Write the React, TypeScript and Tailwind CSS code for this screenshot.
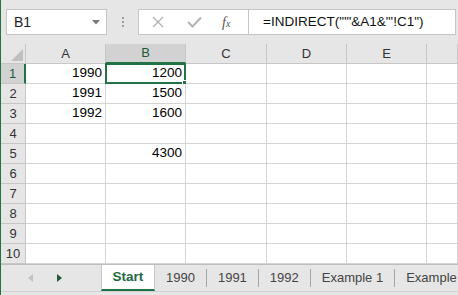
import React from "react";

const cells: Record<string, string> = {
  A1: "1990",
  B1: "1200",
  A2: "1991",
  B2: "1500",
  A3: "1992",
  B3: "1600",
  B5: "4300",
};

const columns = [
  { key: "A", width: "w-[80px]" },
  { key: "B", width: "w-[80px]" },
  { key: "C", width: "w-[81px]" },
  { key: "D", width: "w-[80px]" },
  { key: "E", width: "w-[80px]" },
  { key: "", width: "flex-1" },
];

const rows = [1, 2, 3, 4, 5, 6, 7, 8, 9, 10];

const tabs = ["1990", "1991", "1992", "Example 1", "Example 2"];

function NameBox() {
  return (
    <div className="flex h-[26px] w-[101px] shrink-0 items-center justify-between border border-[#c6c6c6] bg-white pl-[7px] pr-[6px]">
      <span className="text-[14px] text-[#222]">B1</span>
      <svg width="8" height="5" viewBox="0 0 8 5">
        <path d="M0 0 L8 0 L4 4.5 Z" fill="#777" />
      </svg>
    </div>
  );
}

function FormulaBar() {
  return (
    <div className="mr-[2px] flex h-[26px] flex-1 border border-[#c6c6c6] bg-white">
      <div className="flex w-[110px] shrink-0 items-center border-r border-[#c6c6c6]">
        <svg className="ml-[13px]" width="12" height="12" viewBox="0 0 12 12">
          <path d="M1 1 L11 11 M11 1 L1 11" stroke="#b4b4b4" strokeWidth="1.4" />
        </svg>
        <svg className="ml-[23px]" width="15" height="12" viewBox="0 0 15 12">
          <path d="M1 6 L5.5 10.5 L14 1.5" stroke="#b4b4b4" strokeWidth="2" fill="none" />
        </svg>
        <span className="ml-[20px] font-['Liberation_Serif',serif] text-[14px] italic text-[#555]">
          f<span className="text-[10px]">x</span>
        </span>
      </div>
      <div className="flex flex-1 items-center pl-[14px] text-[13.5px] whitespace-nowrap text-[#111]">
        =INDIRECT("'"&amp;A1&amp;"'!C1")
      </div>
    </div>
  );
}

function HeaderRow() {
  return (
    <div className="flex h-[20px] bg-[#e6e6e6]">
      <div className="relative w-[25px] shrink-0 border-r border-b border-[#c6c6c6]">
        <svg className="absolute bottom-[2px] right-[2px]" width="12" height="12" viewBox="0 0 12 12">
          <path d="M12 0 L12 12 L0 12 Z" fill="#bfbfbf" />
        </svg>
      </div>
      {columns.map((c) => {
        const selected = c.key === "B";
        return (
          <div
            key={c.key || "rest"}
            className={
              selected
                ? `${c.width} flex shrink-0 items-center justify-center border-r border-[#c6c6c6] border-b-2 border-b-[#217346] bg-[#d2d2d2] text-[13px] text-[#1e5a3a]`
                : `${c.width} flex items-center justify-center border-r border-b border-[#c6c6c6] text-[13px] text-[#333]`
            }
          >
            {c.key}
          </div>
        );
      })}
    </div>
  );
}

function GridRow({ n }: { n: number }) {
  const selectedRow = n === 1;
  return (
    <div className="flex h-[20px]">
      <div
        className={
          selectedRow
            ? "flex w-[25px] shrink-0 items-center justify-center border-b border-[#c6c6c6] border-r-2 border-r-[#217346] bg-[#d2d2d2] text-[13px] text-[#1e5a3a]"
            : "flex w-[25px] shrink-0 items-center justify-center border-r border-b border-[#c6c6c6] bg-[#e6e6e6] text-[13px] text-[#333]"
        }
      >
        {n}
      </div>
      {columns.map((c) => {
        const id = `${c.key}${n}`;
        const active = id === "B1";
        return (
          <div
            key={c.key || "rest"}
            className={`${c.width} relative flex items-center justify-end border-r border-b border-[#d4d4d4] bg-white pr-[3px] text-[13.5px] text-black`}
          >
            {cells[id] ?? ""}
            {active && (
              <>
                <div className="pointer-events-none absolute -left-[1px] -top-[1px] -right-[1px] -bottom-[1px] border-2 border-[#217346]" />
                <div className="absolute -bottom-[3px] -right-[3px] h-[6px] w-[6px] border border-white bg-[#217346]" />
              </>
            )}
          </div>
        );
      })}
    </div>
  );
}

function TabBar() {
  return (
    <div className="flex h-[31px] flex-col overflow-hidden border-t border-[#bdbdbd] bg-[#e6e6e6]">
      <div className="flex h-[26px] items-stretch">
        <div className="flex w-[100px] shrink-0 items-center">
          <svg className="ml-[27px]" width="5" height="8" viewBox="0 0 5 8">
            <path d="M5 0 L5 8 L0 4 Z" fill="#c2c2c2" />
          </svg>
          <svg className="ml-[24px]" width="5" height="8" viewBox="0 0 5 8">
            <path d="M0 0 L0 8 L5 4 Z" fill="#1e5a3a" />
          </svg>
        </div>
        <div className="flex w-[54px] shrink-0 items-center justify-center border-x border-[#c6c6c6] border-b-2 border-b-[#217346] bg-white text-[13.5px] font-bold text-[#1e6b40]">
          Start
        </div>
        {tabs.map((t, i) => (
          <div key={t} className="flex shrink-0 items-center">
            {i > 0 && <div className="h-[18px] w-px bg-[#a6a6a6]" />}
            <div className="px-[11px] text-[13px] whitespace-nowrap text-[#444]">{t}</div>
          </div>
        ))}
      </div>
      <div className="flex-1 border-t border-[#d0d0d0]" />
    </div>
  );
}

export default function App() {
  return (
    <div className="flex h-[295px] w-[458px] flex-col overflow-hidden border-l border-[#217346] bg-[#e6e6e6] font-['Liberation_Sans',Arial,sans-serif]">
      <div className="flex h-[44px] shrink-0 items-start pl-[5px] pt-[9px]">
        <NameBox />
        <div className="flex h-[26px] w-[31px] shrink-0 flex-col items-center justify-center gap-[2px]">
          <div className="h-[2px] w-[2px] bg-[#a0a0a0]" />
          <div className="h-[2px] w-[2px] bg-[#a0a0a0]" />
          <div className="h-[2px] w-[2px] bg-[#a0a0a0]" />
        </div>
        <FormulaBar />
      </div>
      <div className="flex shrink-0 flex-col">
        <HeaderRow />
        {rows.map((n) => (
          <GridRow key={n} n={n} />
        ))}
      </div>
      <TabBar />
    </div>
  );
}
